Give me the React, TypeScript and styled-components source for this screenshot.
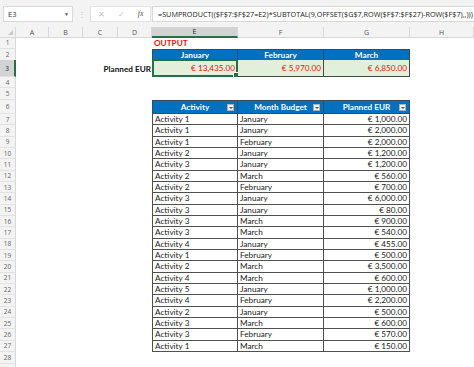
import React from "react";
import styled, { createGlobalStyle, css } from "styled-components";

const GlobalStyle = createGlobalStyle`
  html, body { margin: 0; padding: 0; background: #ffffff; }
  body { width: 474px; height: 367px; overflow: hidden; font-family: "Lato", "Open Sans", sans-serif; }
`;

const COLS = "16px 33px 34px 35px 34px 86px 86px 86px 1fr";

const Sheet = styled.div`
  width: 474px;
  height: 367px;
  overflow: hidden;
  background: #ffffff;
`;

const FormulaBar = styled.div`
  height: 27px;
  display: flex;
  align-items: center;
  background: #f3f3f3;
  padding: 0 0 0 3px;
  box-sizing: border-box;
`;

const NameBox = styled.div`
  width: 70px;
  height: 16px;
  box-sizing: border-box;
  background: #fff;
  border: 1px solid #d9d9d9;
  display: flex;
  align-items: center;
  justify-content: space-between;
  padding: 0 3px 0 4px;
  font-family: "Open Sans", sans-serif;
  font-size: 7.5px;
  color: #333;
`;

const Caret = styled.span`
  font-size: 5px;
  color: #555;
`;

const Dots = styled.div`
  width: 17px;
  text-align: center;
  color: #b8b8b8;
  font-size: 8px;
`;

const IconBox = styled.div`
  width: 61px;
  height: 16px;
  box-sizing: border-box;
  background: #fff;
  border: 1px solid #e3e3e3;
  display: flex;
  align-items: center;
  justify-content: space-around;
  color: #bdbdbd;
  font-size: 8px;
`;

const Fx = styled.span`
  font-family: "Liberation Serif", serif;
  font-style: italic;
  color: #555;
  font-size: 8px;
`;

const FormulaBox = styled.div`
  flex: 1;
  height: 16px;
  margin-left: 1px;
  box-sizing: border-box;
  background: #fff;
  border: 1px solid #d9d9d9;
  border-right: none;
  display: flex;
  align-items: center;
  padding-left: 5px;
  font-family: "Open Sans", sans-serif;
  font-size: 7.25px;
  color: #222;
  white-space: nowrap;
  overflow: hidden;
`;

const Row = styled.div<{ $h: number }>`
  display: grid;
  grid-template-columns: ${COLS};
  height: ${(p) => p.$h}px;
`;

const HeadCell = styled.div<{ $sel?: boolean }>`
  background: ${(p) => (p.$sel ? "#d3d3d3" : "#f3f3f3")};
  border-right: 1px solid #d8d8d8;
  border-bottom: ${(p) => (p.$sel ? "2px solid #217346" : "1px solid #d8d8d8")};
  box-sizing: border-box;
  display: flex;
  align-items: center;
  justify-content: center;
  font-family: "Open Sans", sans-serif;
  font-size: 7px;
  color: ${(p) => (p.$sel ? "#222" : "#555")};
`;

const Corner = styled(HeadCell)`
  position: relative;
  &::after {
    content: "";
    position: absolute;
    right: 2px;
    bottom: 2px;
    border-left: 5px solid transparent;
    border-bottom: 5px solid #c8c8c8;
  }
`;

const RowNum = styled.div<{ $sel?: boolean }>`
  background: ${(p) => (p.$sel ? "#d3d3d3" : "#f3f3f3")};
  border-right: ${(p) => (p.$sel ? "2px solid #217346" : "1px solid #d8d8d8")};
  border-bottom: 1px solid #e2e2e2;
  box-sizing: border-box;
  display: flex;
  align-items: center;
  justify-content: center;
  font-family: "Open Sans", sans-serif;
  font-size: 6.5px;
  color: ${(p) => (p.$sel ? "#222" : "#666")};
`;

type Kind = "blank" | "head" | "out" | "data";

const Cell = styled.div<{ $kind?: Kind; $align?: "left" | "right" | "center"; $first?: boolean; $top?: boolean }>`
  box-sizing: border-box;
  position: relative;
  display: flex;
  align-items: center;
  justify-content: ${(p) => (p.$align === "right" ? "flex-end" : p.$align === "center" ? "center" : "flex-start")};
  padding: 0 2px;
  font-size: 8.2px;
  color: #1a1a1a;
  white-space: nowrap;
  ${(p) =>
    p.$kind === "head" &&
    css`
      background: #0070c0;
      color: #ffffff;
      font-weight: 700;
      border-right: 1px solid #3a4a5a;
      border-bottom: 1px solid #3a4a5a;
      border-top: ${p.$top ? "1px solid #3a4a5a" : "none"};
      border-left: ${p.$first ? "1px solid #3a4a5a" : "none"};
    `}
  ${(p) =>
    p.$kind === "out" &&
    css`
      background: #e2efda;
      color: #e8140c;
      border-right: 1px solid #3f4f3f;
      border-bottom: 1px solid #3f4f3f;
      border-left: ${p.$first ? "1px solid #3f4f3f" : "none"};
    `}
  ${(p) =>
    p.$kind === "data" &&
    css`
      background: #ffffff;
      border-right: 1px solid #505050;
      border-bottom: 1px solid #505050;
      border-left: ${p.$first ? "1px solid #505050" : "none"};
    `}
`;

const OverflowLabel = styled.div`
  grid-column: 2 / 6;
  box-sizing: border-box;
  display: flex;
  align-items: center;
  justify-content: flex-end;
  padding-right: 1px;
  font-size: 8.2px;
  font-weight: 700;
  color: #111;
`;

const OutputLabel = styled.span`
  color: #e8140c;
  font-weight: 700;
  font-size: 8.2px;
`;

const Selected = styled.div`
  position: absolute;
  inset: -1px;
  border: 2px solid #217346;
  pointer-events: none;
`;

const Handle = styled.div`
  position: absolute;
  right: -3px;
  bottom: -3px;
  width: 4px;
  height: 4px;
  background: #217346;
  border: 1px solid #fff;
`;

const HeaderInner = styled.div`
  width: 100%;
  display: grid;
  grid-template-columns: 1fr auto 1fr;
  align-items: center;
`;

const HeaderText = styled.span`
  grid-column: 2;
`;

const FilterBtn = styled.span`
  grid-column: 3;
  justify-self: end;
  width: 7px;
  height: 7px;
  margin-right: 1px;
  background: #f2f2f2;
  border: 1px solid #b0b0b0;
  box-sizing: border-box;
  position: relative;
  &::after {
    content: "";
    position: absolute;
    left: 1px;
    top: 2px;
    border-left: 2px solid transparent;
    border-right: 2px solid transparent;
    border-top: 2px solid #555;
  }
`;

const data: [string, string, string][] = [
  ["Activity 1", "January", "€ 1,000.00"],
  ["Activity 1", "January", "€ 2,000.00"],
  ["Activity 1", "February", "€ 2,000.00"],
  ["Activity 2", "January", "€ 1,200.00"],
  ["Activity 3", "January", "€ 1,200.00"],
  ["Activity 2", "March", "€ 560.00"],
  ["Activity 2", "February", "€ 700.00"],
  ["Activity 3", "January", "€ 6,000.00"],
  ["Activity 3", "January", "€ 80.00"],
  ["Activity 3", "March", "€ 900.00"],
  ["Activity 3", "March", "€ 540.00"],
  ["Activity 4", "January", "€ 455.00"],
  ["Activity 1", "February", "€ 500.00"],
  ["Activity 2", "March", "€ 3,500.00"],
  ["Activity 4", "March", "€ 600.00"],
  ["Activity 5", "January", "€ 1,000.00"],
  ["Activity 4", "February", "€ 2,200.00"],
  ["Activity 2", "January", "€ 500.00"],
  ["Activity 3", "March", "€ 600.00"],
  ["Activity 3", "February", "€ 570.00"],
  ["Activity 1", "March", "€ 150.00"],
];

const letters = ["A", "B", "C", "D", "E", "F", "G", "H"];

const Blanks = ({ n }: { n: number }) => (
  <>
    {Array.from({ length: n }).map((_, i) => (
      <Cell key={i} />
    ))}
  </>
);

const TableHead = ({ label, first }: { label: string; first?: boolean }) => (
  <Cell $kind="head" $first={first} $top>
    <HeaderInner>
      <HeaderText>{label}</HeaderText>
      <FilterBtn />
    </HeaderInner>
  </Cell>
);

export default function App() {
  const rowH = 238 / 21;
  return (
    <Sheet>
      <GlobalStyle />
      <FormulaBar>
        <NameBox>
          E3 <Caret>▼</Caret>
        </NameBox>
        <Dots>⋮</Dots>
        <IconBox>
          <span>✕</span>
          <span>✓</span>
          <Fx>fx</Fx>
        </IconBox>
        <FormulaBox>
          =SUMPRODUCT(($F$7:$F$27=E2)*SUBTOTAL(9,OFFSET($G$7,ROW($F$7:$F$27)-ROW($F$7),,)))
        </FormulaBox>
      </FormulaBar>

      <Row $h={10}>
        <Corner />
        {letters.map((l) => (
          <HeadCell key={l} $sel={l === "E"}>
            {l}
          </HeadCell>
        ))}
      </Row>

      <Row $h={12}>
        <RowNum>1</RowNum>
        <Blanks n={4} />
        <Cell>
          <OutputLabel>OUTPUT</OutputLabel>
        </Cell>
        <Blanks n={3} />
      </Row>

      <Row $h={11}>
        <RowNum>2</RowNum>
        <Blanks n={4} />
        <Cell $kind="head" $align="center" $first $top>January</Cell>
        <Cell $kind="head" $align="center" $top>February</Cell>
        <Cell $kind="head" $align="center" $top>March</Cell>
        <Cell />
      </Row>

      <Row $h={17}>
        <RowNum $sel>3</RowNum>
        <OverflowLabel>Planned EUR</OverflowLabel>
        <Cell $kind="out" $align="right" $first>
          € 13,435.00
          <Selected>
            <Handle />
          </Selected>
        </Cell>
        <Cell $kind="out" $align="right">€ 5,970.00</Cell>
        <Cell $kind="out" $align="right">€ 6,850.00</Cell>
        <Cell />
      </Row>

      <Row $h={11}>
        <RowNum>4</RowNum>
        <Blanks n={8} />
      </Row>
      <Row $h={12}>
        <RowNum>5</RowNum>
        <Blanks n={8} />
      </Row>

      <Row $h={14}>
        <RowNum>6</RowNum>
        <Blanks n={4} />
        <TableHead label="Activity" first />
        <TableHead label="Month Budget" />
        <TableHead label="Planned EUR" />
        <Cell />
      </Row>

      {data.map(([a, m, v], i) => (
        <Row key={i} $h={rowH}>
          <RowNum>{i + 7}</RowNum>
          <Blanks n={4} />
          <Cell $kind="data" $first>{a}</Cell>
          <Cell $kind="data">{m}</Cell>
          <Cell $kind="data" $align="right">{v}</Cell>
          <Cell />
        </Row>
      ))}

      <Row $h={12}>
        <RowNum>28</RowNum>
        <Blanks n={8} />
      </Row>
      <Row $h={12}>
        <RowNum />
        <Blanks n={8} />
      </Row>
    </Sheet>
  );
}
